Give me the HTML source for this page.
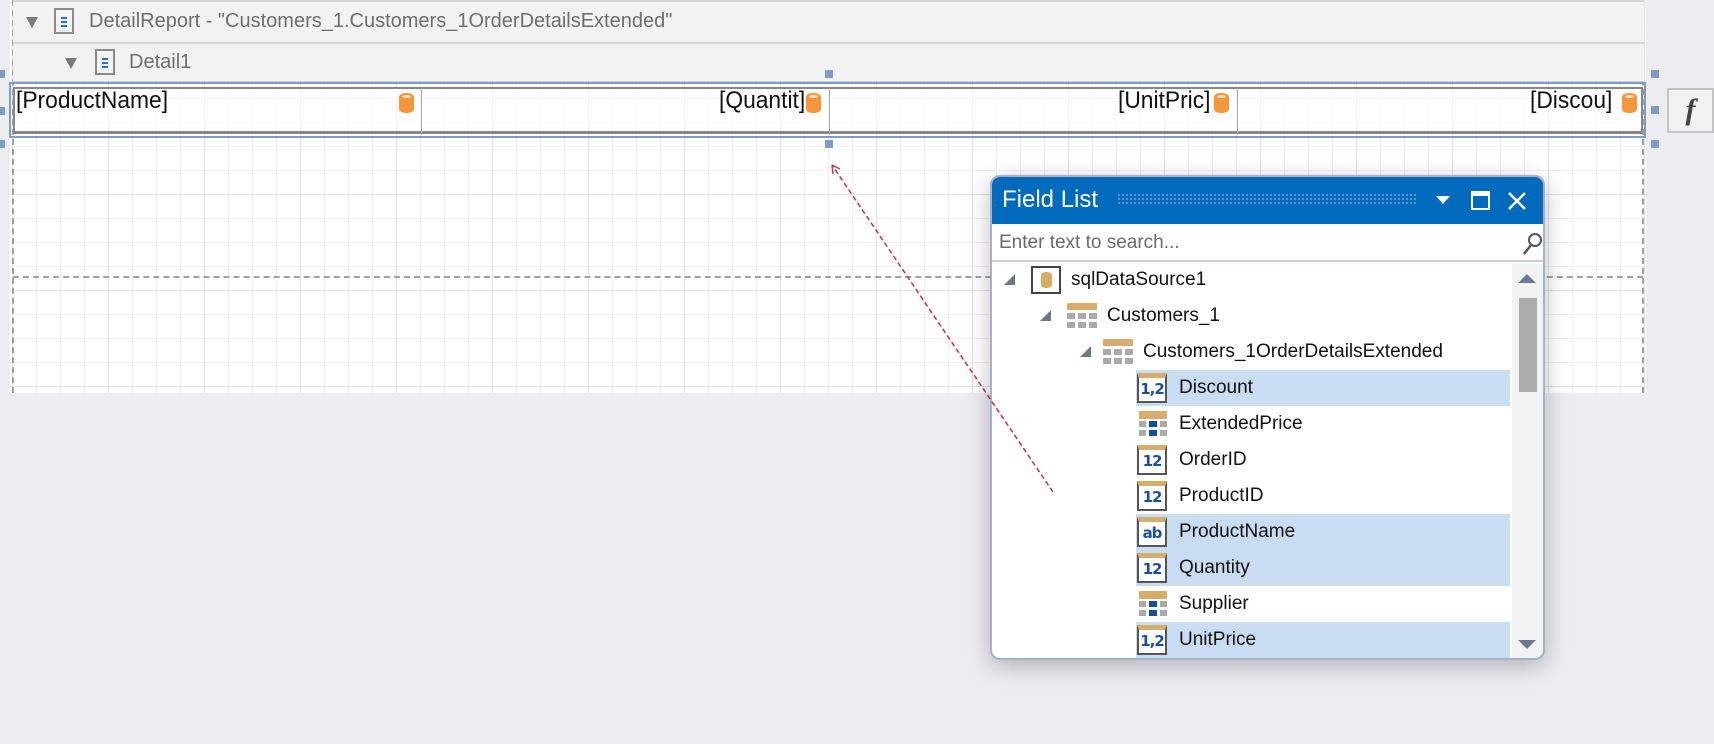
<!DOCTYPE html>
<html><head><meta charset="utf-8"><style>
*{margin:0;padding:0;box-sizing:border-box}
body{width:1714px;height:744px;background:#ececf1;position:relative;overflow:hidden;font-family:"Liberation Sans",sans-serif}
.abs{position:absolute}
#surf{left:10px;top:0;width:1636px;height:393px;background-color:#fff;
background-image:linear-gradient(#e2e2e2 1px,transparent 1px),linear-gradient(90deg,#e2e2e2 1px,transparent 1px),linear-gradient(#f0f0f0 1px,transparent 1px),linear-gradient(90deg,#f0f0f0 1px,transparent 1px);
background-size:96px 96px,96px 96px,24px 24px,24px 24px;background-position:2px 2px,2px 2px,2px 2px,2px 2px}
.band{left:13px;width:1631px;background:#f2f2f2;border-bottom:2px solid #d4d4d4;color:#6e6e6e;font-size:19px}
.tri{width:0;height:0;border-left:6px solid transparent;border-right:6px solid transparent;border-top:11px solid #7a7a7a}
.bicon{width:20px;height:26px;border:2px solid #8a8a8a;background:#f4f4f4}
.bicon i{position:absolute;left:5px;width:6px;height:2px;background:#2a6fc4}
.handle{width:8px;height:8px;background:#7f9cc8}
.cyl{width:15px;height:20px;background:#f6963a;border-radius:7px/4px}
.cyl::after{content:"";position:absolute;left:3px;top:2px;width:9px;height:3px;border-radius:50%;background:#fde4c8}
.ct{font-size:24px;color:#111;top:87px;transform:scaleX(0.95);transform-origin:left}
#fl{left:990px;top:175px;width:555px;height:485px;background:#fff;border:2px solid #a8b0c8;border-radius:10px;overflow:hidden;box-shadow:0 6px 24px rgba(0,0,0,.25)}
.row{position:absolute;height:36px;font-size:19px;color:#111;line-height:36px}
.hl{background:#c8dcf2}
.fi{position:absolute;width:30px;height:30px;top:3px;border:2px solid #555;border-top:5px solid #d6ad6c;background:#fff;color:#1a4f9c;font-weight:bold;font-size:15px;line-height:22px;text-align:center;font-family:"DejaVu Sans",sans-serif;letter-spacing:-1px}
.ti{width:0;height:0;border-left:11px solid transparent;border-bottom:11px solid #707880}
</style></head><body>
<div id="surf" class="abs"></div>
<div class="abs" style="left:12px;top:0;width:0;height:393px;border-left:2px dashed #a0a0a0"></div>
<div class="abs" style="left:1642px;top:0;width:0;height:393px;border-left:2px dashed #a0a0a0"></div>
<div class="abs" style="left:13px;top:276px;width:1630px;height:0;border-top:2px dashed #a0a0a0"></div>

<div class="abs band" style="top:0;height:44px;border-top:2px solid #d4d4d4"></div>
<div class="abs tri" style="left:26px;top:17px"></div>
<div class="abs bicon" style="left:54px;top:8px"><i style="top:7px"></i><i style="top:11px"></i><i style="top:15px"></i></div>
<div class="abs" style="left:89px;top:10px;font-size:20px;color:#6e6e6e">DetailReport - "Customers_1.Customers_1OrderDetailsExtended"</div>
<div class="abs band" style="top:44px;height:39px"></div>
<div class="abs tri" style="left:65px;top:58px"></div>
<div class="abs bicon" style="left:95px;top:49px"><i style="top:7px"></i><i style="top:11px"></i><i style="top:15px"></i></div>
<div class="abs" style="left:129px;top:51px;font-size:20px;color:#6e6e6e">Detail1</div>

<div class="abs" style="left:9px;top:82px;width:1637px;height:56px;border:2px solid #7f9cc8"></div>
<div class="abs" style="left:13px;top:87px;width:1630px;height:47px;border:2px solid #888;border-bottom-width:3px;background:rgba(255,255,255,.6)"></div>
<div class="abs" style="left:421px;top:88px;width:1px;height:45px;background:#aaa"></div>
<div class="abs" style="left:829px;top:88px;width:1px;height:45px;background:#aaa"></div>
<div class="abs" style="left:1237px;top:88px;width:1px;height:45px;background:#aaa"></div>
<div class="abs ct" style="left:16px">[ProductName]</div>
<div class="abs cyl" style="left:399px;top:93px"></div>
<div class="abs ct" style="left:719px">[Quantit]</div>
<div class="abs cyl" style="left:806px;top:93px"></div>
<div class="abs ct" style="left:1118px">[UnitPric]</div>
<div class="abs cyl" style="left:1214px;top:93px"></div>
<div class="abs ct" style="left:1530px">[Discou]</div>
<div class="abs cyl" style="left:1622px;top:93px"></div>

<div class="abs handle" style="left:-3px;top:70px"></div>
<div class="abs handle" style="left:-3px;top:107px"></div>
<div class="abs handle" style="left:-3px;top:140px"></div>
<div class="abs handle" style="left:825px;top:70px"></div>
<div class="abs handle" style="left:825px;top:140px"></div>
<div class="abs handle" style="left:1651px;top:70px"></div>
<div class="abs handle" style="left:1651px;top:106px"></div>
<div class="abs handle" style="left:1651px;top:140px"></div>
<div class="abs" style="left:1667px;top:88px;width:47px;height:45px;border:2px solid #c4c4c4;background:#f2f2f2;font-family:'Liberation Serif',serif;font-style:italic;font-weight:bold;font-size:30px;color:#444;text-align:center;line-height:40px">f</div>

<div id="fl" class="abs">
 <div class="abs" style="left:0;top:0;width:553px;height:47px;background:#006bbd"></div>
 <div class="abs" style="left:10px;top:9px;color:#fff;font-size:24px">Field List</div>
 <div class="abs" style="left:125px;top:16px;width:300px;height:12px;background-image:radial-gradient(#5a9ad8 1px,transparent 1.2px);background-size:4px 4px"></div>
 <div class="abs" style="left:444px;top:19px;border-left:7px solid transparent;border-right:7px solid transparent;border-top:8px solid #fff"></div>
 <div class="abs" style="left:479px;top:14px;width:19px;height:19px;border:2px solid #fff;border-top-width:5px"></div>
 <svg class="abs" style="left:515px;top:14px" width="20" height="20"><path d="M2 2L18 18M18 2L2 18" stroke="#fff" stroke-width="2.5"/></svg>
 <div class="abs" style="left:0;top:47px;width:553px;height:38px;border-bottom:2px solid #c8cfe0"></div>
 <div class="abs" style="left:7px;top:55px;font-size:19px;color:#6a6a6a">Enter text to search...</div>
 <svg class="abs" style="left:530px;top:55px" width="22" height="24"><circle cx="13" cy="8" r="6" fill="none" stroke="#555" stroke-width="2"/><line x1="9" y1="13" x2="2" y2="22" stroke="#555" stroke-width="2.5"/></svg>
 <div class="abs" style="left:520px;top:87px;width:33px;height:400px;background:#f2f2f2"></div>
 <div class="abs" style="left:526px;top:97px;border-left:9px solid transparent;border-right:9px solid transparent;border-bottom:9px solid #6a7894"></div>
 <div class="abs" style="left:527px;top:121px;width:18px;height:94px;background:#ababab"></div>
 <div class="abs" style="left:526px;top:463px;border-left:9px solid transparent;border-right:9px solid transparent;border-top:9px solid #6a7894"></div>
</div>
<div class="abs" style="left:992px;top:262px;width:518px;height:396px;overflow:hidden">
 <div class="row" style="left:0;top:0;width:518px">
  <div class="abs ti" style="left:12px;top:12px"></div>
  <div class="abs" style="left:39px;top:4px;width:30px;height:28px;border:2px solid #444;background:#fff"><div class="abs" style="left:8px;top:4px;width:11px;height:16px;background:#d9ac63;border-radius:5px/3px"></div></div>
  <span class="abs" style="left:79px">sqlDataSource1</span></div>
 <div class="row" style="left:0;top:36px;width:518px">
  <div class="abs ti" style="left:48px;top:12px"></div>
  <svg class="abs" style="left:75px;top:5px" width="30" height="26"><rect x="0" y="0" width="30" height="7" fill="#d6ad6c"/><g fill="#aaa"><rect x="0" y="10" width="8" height="6"/><rect x="11" y="10" width="8" height="6"/><rect x="22" y="10" width="8" height="6"/><rect x="0" y="19" width="8" height="6"/><rect x="11" y="19" width="8" height="6"/><rect x="22" y="19" width="8" height="6"/></g></svg>
  <span class="abs" style="left:115px">Customers_1</span></div>
 <div class="row" style="left:0;top:72px;width:518px">
  <div class="abs ti" style="left:88px;top:12px"></div>
  <svg class="abs" style="left:111px;top:5px" width="30" height="26"><rect x="0" y="0" width="30" height="7" fill="#d6ad6c"/><g fill="#aaa"><rect x="0" y="10" width="8" height="6"/><rect x="11" y="10" width="8" height="6"/><rect x="22" y="10" width="8" height="6"/><rect x="0" y="19" width="8" height="6"/><rect x="11" y="19" width="8" height="6"/><rect x="22" y="19" width="8" height="6"/></g></svg>
  <span class="abs" style="left:151px">Customers_1OrderDetailsExtended</span></div>
 <div class="row hl" style="left:144px;top:108px;width:374px"><div class="fi" style="left:1px">1,2</div><span class="abs" style="left:43px">Discount</span></div>
 <div class="row" style="left:144px;top:144px;width:374px"><svg class="abs" style="left:3px;top:5px" width="28" height="26"><rect width="28" height="8" fill="#d6ad6c"/><g fill="#aaa"><rect y="10" width="7" height="6"/><rect x="21" y="10" width="7" height="6"/><rect y="19" width="7" height="6"/><rect x="21" y="19" width="7" height="6"/></g><g fill="#0f4f9c"><rect x="10" y="10" width="8" height="6"/><rect x="10" y="19" width="8" height="6"/></g></svg><span class="abs" style="left:43px">ExtendedPrice</span></div>
 <div class="row" style="left:144px;top:180px;width:374px"><div class="fi" style="left:1px">12</div><span class="abs" style="left:43px">OrderID</span></div>
 <div class="row" style="left:144px;top:216px;width:374px"><div class="fi" style="left:1px">12</div><span class="abs" style="left:43px">ProductID</span></div>
 <div class="row hl" style="left:144px;top:252px;width:374px"><div class="fi" style="left:1px">ab</div><span class="abs" style="left:43px">ProductName</span></div>
 <div class="row hl" style="left:144px;top:288px;width:374px"><div class="fi" style="left:1px">12</div><span class="abs" style="left:43px">Quantity</span></div>
 <div class="row" style="left:144px;top:324px;width:374px"><svg class="abs" style="left:3px;top:5px" width="28" height="26"><rect width="28" height="8" fill="#d6ad6c"/><g fill="#aaa"><rect y="10" width="7" height="6"/><rect x="21" y="10" width="7" height="6"/><rect y="19" width="7" height="6"/><rect x="21" y="19" width="7" height="6"/></g><g fill="#0f4f9c"><rect x="10" y="10" width="8" height="6"/><rect x="10" y="19" width="8" height="6"/></g></svg><span class="abs" style="left:43px">Supplier</span></div>
 <div class="row hl" style="left:144px;top:360px;width:374px"><div class="fi" style="left:1px">1,2</div><span class="abs" style="left:43px">UnitPrice</span></div>
</div>

<svg class="abs" style="left:0;top:0" width="1714" height="744"><line x1="1053" y1="492" x2="832" y2="165" stroke="#c8304c" stroke-width="1.5" stroke-dasharray="5,3"/><path d="M832 165 l1 9 M832 165 l8 4" stroke="#c8304c" stroke-width="1.5"/></svg>
</body></html>
